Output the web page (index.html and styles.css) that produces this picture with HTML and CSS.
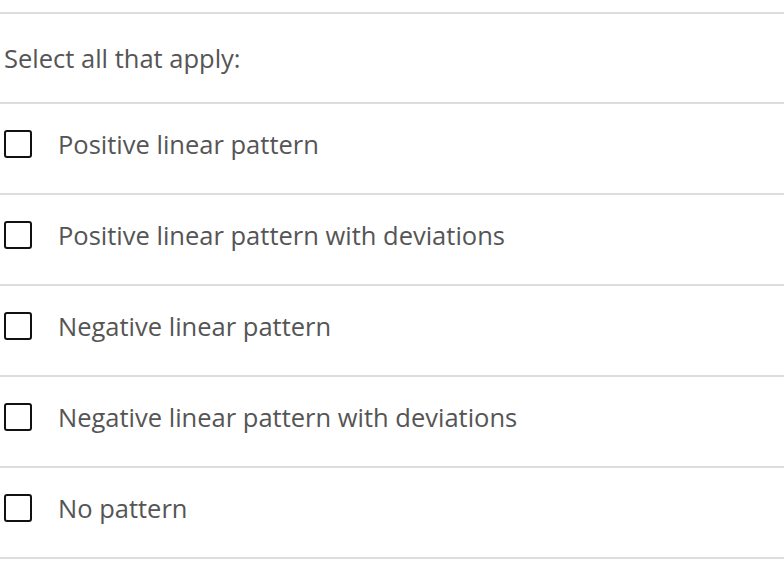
FILE: index.html
```html
<!DOCTYPE html>
<html>
<head>
<meta charset="utf-8">
<link rel="stylesheet" href="styles.css">
</head>
<body>
<div class="question">
  <div class="prompt">Select all that apply:</div>
  <ul class="options">
    <li class="option"><span class="box"></span><span class="label">Positive linear pattern</span></li>
    <li class="option"><span class="box"></span><span class="label">Positive linear pattern with deviations</span></li>
    <li class="option"><span class="box"></span><span class="label">Negative linear pattern</span></li>
    <li class="option"><span class="box"></span><span class="label">Negative linear pattern with deviations</span></li>
    <li class="option"><span class="box"></span><span class="label">No pattern</span></li>
  </ul>
</div>
</body>
</html>
```
FILE: styles.css
```css
html, body {
  margin: 0;
  padding: 0;
  background: #fff;
}
body {
  font-family: "Open Sans", "DejaVu Sans", sans-serif;
  color: #555;
  padding-top: 12px;
}
.question {
  border-top: 2px solid #ddd;
}
.prompt {
  height: 88px;
  display: flex;
  align-items: center;
  padding-left: 4px;
  font-size: 25.5px;
  border-bottom: 2px solid #ddd;
}
.options {
  list-style: none;
  margin: 0;
  padding: 0;
}
.option {
  box-sizing: border-box;
  height: 91px;
  padding-bottom: 10px;
  display: flex;
  align-items: center;
  border-bottom: 2px solid #ddd;
  font-size: 25.5px;
}
.box {
  box-sizing: border-box;
  width: 28px;
  height: 28px;
  margin-left: 4px;
  border: 2.5px solid #111;
  border-radius: 3px;
  flex: none;
}
.label {
  margin-left: 26px;
}
```
